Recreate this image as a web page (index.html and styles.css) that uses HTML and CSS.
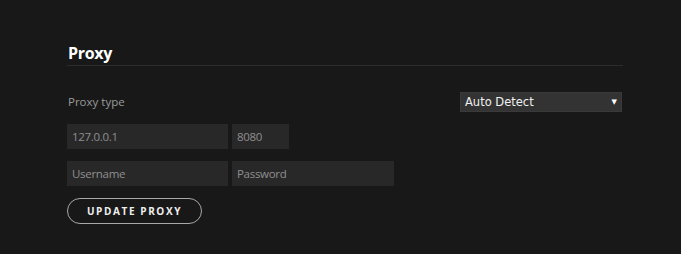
FILE: index.html
```html
<!DOCTYPE html>
<html>
<head>
<meta charset="utf-8">
<link rel="stylesheet" href="styles.css">
</head>
<body>
<section class="proxy">
  <h2 class="title">Proxy</h2>
  <div class="type-row">
    <span class="label">Proxy type</span>
    <div class="select"><span>Auto Detect</span><span class="arrow">&#9660;</span></div>
  </div>
  <div class="field-row">
    <div class="field host">127.0.0.1</div>
    <div class="field port">8080</div>
  </div>
  <div class="field-row">
    <div class="field user">Username</div>
    <div class="field pass">Password</div>
  </div>
  <button class="btn">UPDATE PROXY</button>
</section>
</body>
</html>
```

FILE: styles.css
```css
html, body {
  margin: 0;
  padding: 0;
  background: #181818;
  height: 100%;
}
body {
  font-family: "Open Sans", "Liberation Sans", sans-serif;
  color: #fff;
}
.proxy {
  width: 556px;
  margin-left: 67px;
  padding-top: 43px;
}
.title {
  margin: 0;
  font-family: "Open Sans", sans-serif;
  font-size: 16px;
  font-weight: 700;
  line-height: 20px;
  padding-left: 1px;
  padding-bottom: 2px;
  border-bottom: 1px solid #2c2c2c;
  letter-spacing: -0.3px;
}
.type-row {
  display: flex;
  justify-content: space-between;
  align-items: center;
  margin-top: 26px;
  margin-right: 1px;
}
.label {
  font-size: 11.5px;
  color: #9a9a9a;
  padding-left: 1px;
  line-height: 20px;
}
.select {
  height: 20px;
  background: #333;
  box-sizing: border-box;
  border: 1px solid #3a3a3a;
  display: flex;
  align-items: center;
  justify-content: space-between;
  padding: 0 4px 0 4px;
  font-family: "DejaVu Sans", "Liberation Sans", sans-serif;
  font-size: 11.5px;
  color: #f0f0f0;
  width: 162px;
}
.arrow {
  font-size: 7px;
  color: #fff;
}
.field-row {
  display: flex;
  gap: 4px;
  margin-top: 12px;
}
.field {
  height: 25px;
  line-height: 25px;
  background: #282828;
  color: #8f8f8f;
  font-size: 11.5px;
  padding-left: 5px;
  box-sizing: border-box;
  letter-spacing: -0.3px;
}
.host, .user { width: 161px; }
.port { width: 57px; }
.pass { width: 162px; }
.btn {
  margin-top: 12px;
  width: 135px;
  height: 26px;
  border: 1px solid #a8a8a8;
  border-radius: 13px;
  background: transparent;
  color: #eee;
  font-family: "Open Sans", sans-serif;
  font-weight: 700;
  font-size: 10px;
  letter-spacing: 1.6px;
  padding: 0;
}
```
